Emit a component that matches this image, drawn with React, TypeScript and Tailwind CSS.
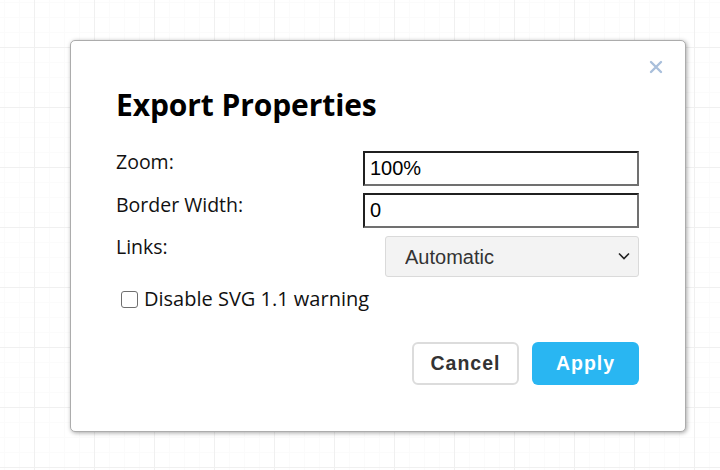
import { useState } from 'react';

export default function App() {
  const [zoom, setZoom] = useState('100%');
  const [border, setBorder] = useState('0');
  const [links, setLinks] = useState('auto');
  const [noWarn, setNoWarn] = useState(false);

  return (
    <div className="w-[720px] h-[470px] overflow-hidden bg-white [background-image:linear-gradient(#f0f0f0_1px,transparent_1px),linear-gradient(90deg,#f0f0f0_1px,transparent_1px),linear-gradient(#fbfbfb_1px,transparent_1px),linear-gradient(90deg,#fbfbfb_1px,transparent_1px)] [background-size:60px_60px,60px_60px,15px_15px,15px_15px] [background-position:34px_47px,34px_47px,34px_47px,34px_47px] pt-[40px] pl-[70px]">
      <div className="relative w-[616px] h-[392px] bg-white border border-[#acacac] rounded-[5px] shadow-[1px_1px_4px_rgba(0,0,0,0.35)] pl-[45px] pr-[46px] pt-[45px] font-['Open_Sans',sans-serif] text-[#111]">
        <button className="absolute top-[19px] right-[22px] w-[14px] h-[14px]">
          <svg viewBox="0 0 14 14" className="w-[14px] h-[14px]">
            <path d="M2 2 L12 12 M12 2 L2 12" stroke="#a9bfdb" strokeWidth="2.4" strokeLinecap="round" />
          </svg>
        </button>

        <h1 className="text-[30px] leading-[38px] font-bold tracking-[-0.1px] text-black">Export Properties</h1>

        <div className="mt-[27px] flex flex-col">
          <div className="flex justify-between h-[35px]">
            <label className="text-[19.5px] leading-[24px] -mt-[1px]">Zoom:</label>
            <input
              value={zoom}
              onChange={e => setZoom(e.target.value)}
              className="w-[276px] h-[35px] border-2 border-t-[#202020] border-l-[#202020] border-r-[#707070] border-b-[#707070] px-[5px] font-['Liberation_Sans',sans-serif] text-[20px] text-black outline-none"
            />
          </div>
          <div className="flex justify-between h-[35px] mt-[7px]">
            <label className="text-[19.5px] leading-[24px] mt-[0px]">Border Width:</label>
            <input
              value={border}
              onChange={e => setBorder(e.target.value)}
              className="w-[276px] h-[35px] border-2 border-t-[#202020] border-l-[#202020] border-r-[#707070] border-b-[#707070] px-[5px] font-['Liberation_Sans',sans-serif] text-[20px] text-black outline-none"
            />
          </div>
          <div className="flex justify-between h-[41px] mt-[8px]">
            <label className="text-[19.5px] leading-[24px] -mt-[1px]">Links:</label>
            <div className="relative w-[254px] h-[41px]">
              <select
                value={links}
                onChange={e => setLinks(e.target.value)}
                className="appearance-none w-full h-full bg-[#f3f3f3] border border-[#dadada] rounded-[3px] pl-[19px] font-['Liberation_Sans',sans-serif] text-[20px] text-[#333] outline-none"
              >
                <option value="auto">Automatic</option>
                <option value="blank">Open in New Window</option>
                <option value="self">Open in Same Window</option>
              </select>
              <svg viewBox="0 0 12 8" className="absolute right-[9px] top-[16px] w-[12px] h-[8px] pointer-events-none">
                <path d="M1 1.5 L6 6.5 L11 1.5" fill="none" stroke="#222" strokeWidth="1.6" />
              </svg>
            </div>
          </div>
        </div>

        <label className="mt-[10px] ml-[5px] flex items-center gap-[6px] cursor-pointer w-fit">
          <input type="checkbox" checked={noWarn} onChange={e => setNoWarn(e.target.checked)} className="peer sr-only" />
          <span className="w-[17px] h-[17px] border border-[#6f6f6f] rounded-[3px] bg-white peer-checked:bg-[#0075ff]" />
          <span className="text-[20px] leading-[24px] text-[#111]">Disable SVG 1.1 warning</span>
        </label>

        <div className="flex justify-end gap-[13px] mt-[31px]">
          <button className="w-[107px] h-[43px] bg-white border-2 border-[#dcdcdc] rounded-[6px] font-['Liberation_Sans',sans-serif] font-bold text-[19.5px] tracking-[1px] text-[#333]">
            Cancel
          </button>
          <button className="w-[107px] h-[43px] bg-[#29b6f2] rounded-[6px] font-['Liberation_Sans',sans-serif] font-bold text-[19.5px] tracking-[1px] text-white">
            Apply
          </button>
        </div>
      </div>
    </div>
  );
}
